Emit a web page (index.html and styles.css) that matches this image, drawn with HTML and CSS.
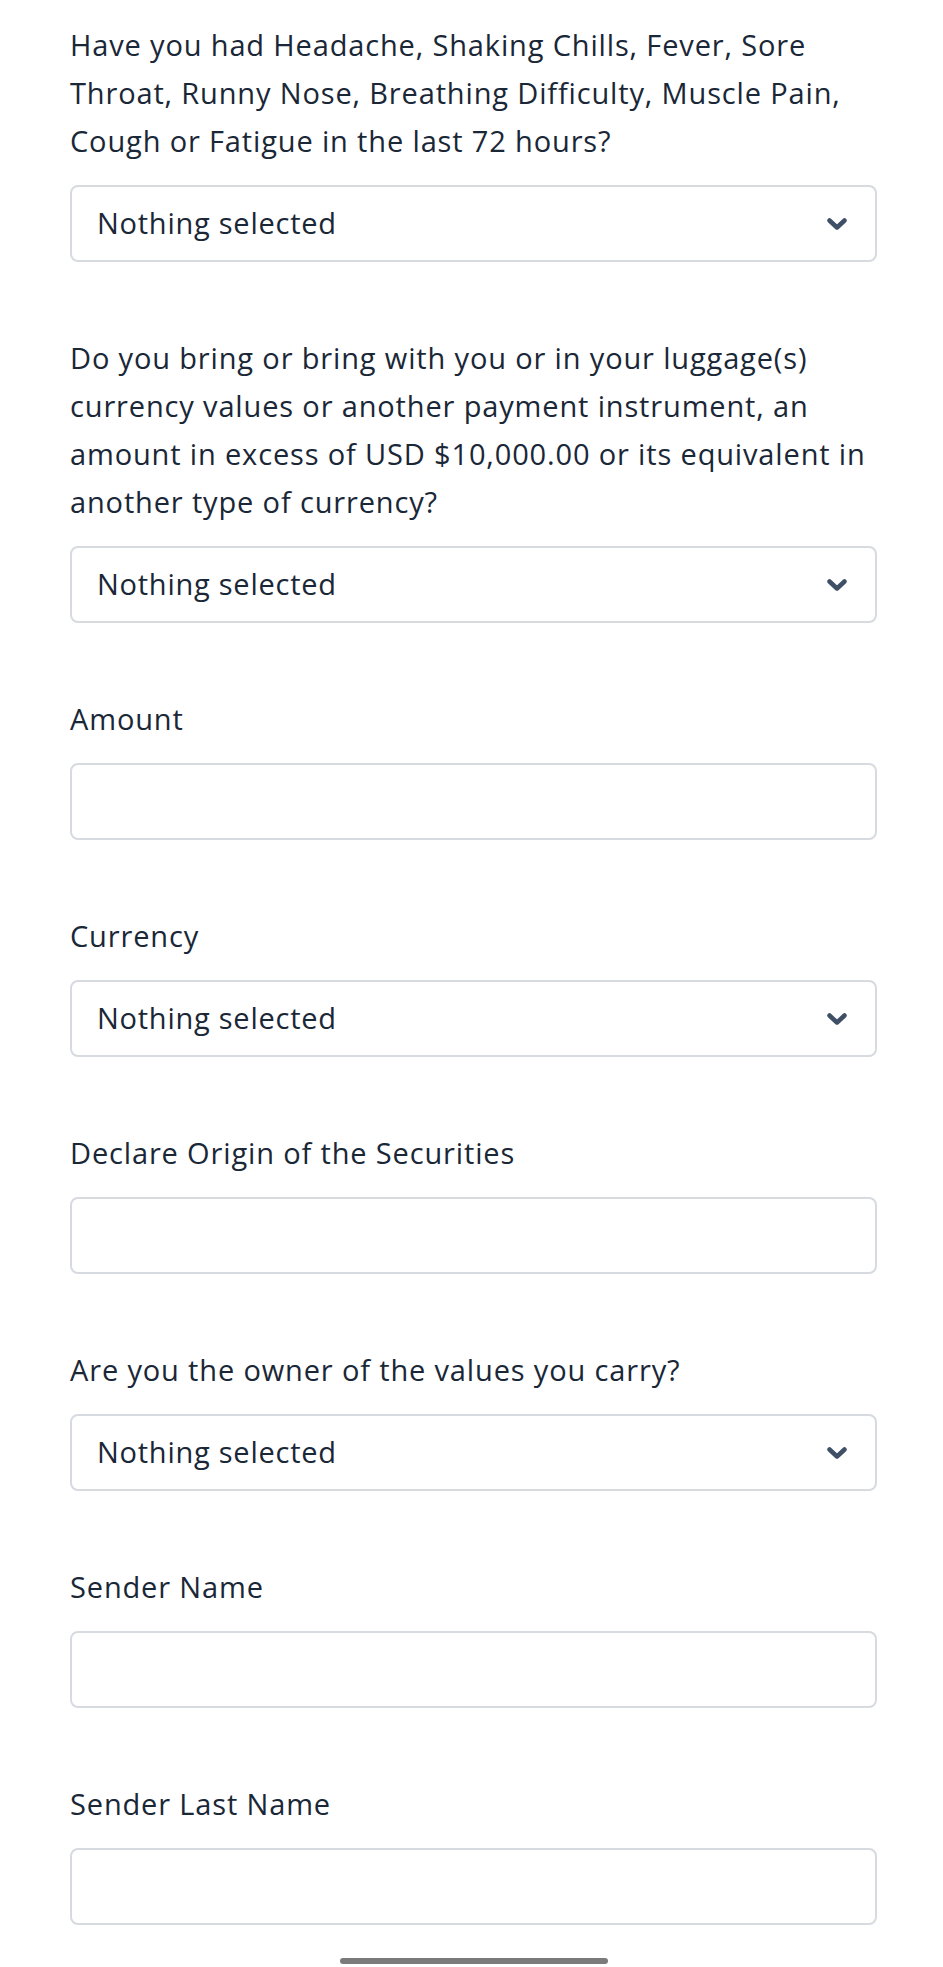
FILE: index.html
```html
<!DOCTYPE html>
<html lang="en">
<head>
    <meta charset="UTF-8">
    <meta name="viewport" content="width=device-width, initial-scale=1.0">
    <title>Customs Declaration</title>
    <link rel="stylesheet" href="styles.css">
</head>
<body>

    <div class="form">
        <div class="field">
            <div class="label">Have you had Headache, Shaking Chills, Fever, Sore Throat, Runny Nose, Breathing Difficulty, Muscle Pain, Cough or Fatigue in the last 72 hours?</div>
            <div class="control select">
                <span>Nothing selected</span>
                <svg class="caret" width="20" height="12" viewBox="0 0 20 12"><polyline points="2.5,2.5 10,9.5 17.5,2.5" /></svg>
            </div>
        </div>

        <div class="field">
            <div class="label">Do you bring or bring with you or in your luggage(s) currency values or another payment instrument, an amount in excess of USD $10,000.00 or its equivalent in another type of currency?</div>
            <div class="control select">
                <span>Nothing selected</span>
                <svg class="caret" width="20" height="12" viewBox="0 0 20 12"><polyline points="2.5,2.5 10,9.5 17.5,2.5" /></svg>
            </div>
        </div>

        <div class="field">
            <div class="label">Amount</div>
            <input class="control" type="text">
        </div>

        <div class="field">
            <div class="label">Currency</div>
            <div class="control select">
                <span>Nothing selected</span>
                <svg class="caret" width="20" height="12" viewBox="0 0 20 12"><polyline points="2.5,2.5 10,9.5 17.5,2.5" /></svg>
            </div>
        </div>

        <div class="field">
            <div class="label">Declare Origin of the Securities</div>
            <input class="control" type="text">
        </div>

        <div class="field">
            <div class="label">Are you the owner of the values you carry?</div>
            <div class="control select">
                <span>Nothing selected</span>
                <svg class="caret" width="20" height="12" viewBox="0 0 20 12"><polyline points="2.5,2.5 10,9.5 17.5,2.5" /></svg>
            </div>
        </div>

        <div class="field">
            <div class="label">Sender Name</div>
            <input class="control" type="text">
        </div>

        <div class="field last">
            <div class="label">Sender Last Name</div>
            <input class="control" type="text">
        </div>
    </div>

    <div class="home-bar"></div>

</body>
</html>
```

FILE: styles.css
```css
body{
    margin: 0;
    background-color: #ffffff;
    font-family: "Open Sans", "Liberation Sans", sans-serif;
    color: #1a2737;
}
.form{
    padding: 21px 66px 0 70px;
}
.field{
    margin-bottom: 72px;
}
.field.last{
    margin-bottom: 33px;
}
.label{
    font-size: 29px;
    letter-spacing: 0.85px;
    line-height: 48px;
    margin: 0 -10px 20px 0;
}
.control{
    display: flex;
    align-items: center;
    justify-content: space-between;
    box-sizing: border-box;
    width: 100%;
    height: 77px;
    margin: 0;
    padding: 0 28px 0 25px;
    border: 2px solid #d7dbdf;
    border-radius: 8px;
    background-color: #ffffff;
    font-family: inherit;
    font-size: 29px;
    letter-spacing: 0.75px;
    color: #1a2737;
    outline: none;
}
.select span{
    position: relative;
    top: -1px;
}
.caret polyline{
    fill: none;
    stroke: #3e4f66;
    stroke-width: 4.5;
    stroke-linecap: round;
    stroke-linejoin: round;
}
.home-bar{
    width: 268px;
    height: 6px;
    margin: 0 auto 3px auto;
    border-radius: 3px;
    background-color: #7b7b7b;
    position: relative;
    left: 2px;
}
```
